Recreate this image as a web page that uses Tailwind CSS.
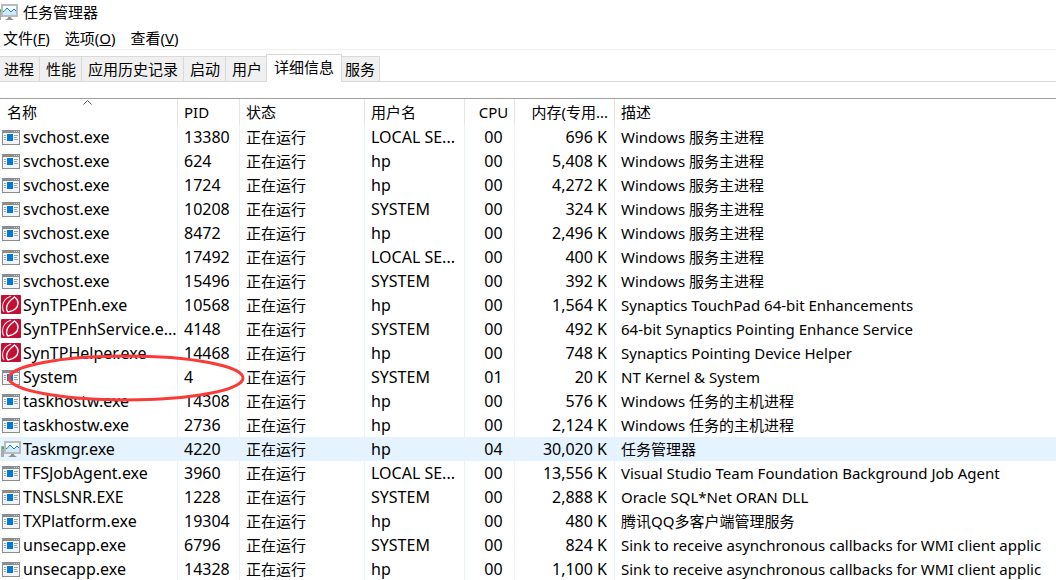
<!DOCTYPE html>
<html lang="zh-CN">
<head>
  <meta charset="UTF-8" />
  <meta name="viewport" content="width=device-width, initial-scale=1" />
  <title>任务管理器</title>
  <script src="https://cdn.jsdelivr.net/npm/@tailwindcss/browser@4"></script>
</head>
<body class="bg-white text-black h-screen overflow-hidden flex flex-col font-['Noto_Sans','Noto_Sans_CJK_SC',sans-serif] text-[15px] leading-6">

  <!-- Icon set -->
  <svg class="hidden">
    <symbol id="icon-app" viewBox="0 0 18 15">
      <rect width="18" height="15" fill="#8a8d90" />
      <rect x="1" y="3" width="16" height="11" fill="#f3f3f3" />
      <path d="M12 1h1v1h-1zM14 1h1v1h-1zM16 1h1v1h-1z" fill="#d0d2d3" />
      <rect x="5" y="4" width="6" height="7" fill="#0078d7" />
      <path d="M2 5.5h2M2 7.5h2M2 9.5h2M12 5.5h4M12 7.5h3M12 9.5h4" stroke="#a0a3a6" />
    </symbol>
    <symbol id="icon-syn" viewBox="0 0 20 20">
      <rect width="20" height="19" rx="1" fill="#c40f35" />
      <path d="M10 1C5 3 1.5 7 1.5 12c0 2 .5 3.500 1.500 5" fill="none" stroke="#f6d5dc" stroke-width="1.2" />
      <path d="M13.5 2C8 6 5.5 9 5.5 13c0 1.500.5 3 1.500 4c6-1 10-4 10-9c0-2.500-1.500-4.500-3.500-6z" fill="none" stroke="#fff" stroke-width="1.4" />
    </symbol>
    <symbol id="icon-mgr" viewBox="0 0 20 18">
      <path d="M0 6h3v11H0z" fill="#a9acae" />
      <path d="M1 7h2v2H1z" fill="#22c522" />
      <rect x="3" y="1" width="17" height="13" fill="#b9bbbd" />
      <rect x="5" y="3" width="13" height="9" fill="#fafdff" />
      <path d="M5 8l2 0 3-3 3 4 3-3 2 1v5H5z" fill="#cfeafb" />
      <path d="M5 8.5h1l3-3.5 4 4 3-3 2 2" fill="none" stroke="#1682c4" />
      <path d="M10 14h3v1l3 2H7l3-2z" fill="#8f9295" />
    </symbol>
  </svg>

  <!-- Title bar -->
  <header class="flex items-center h-[23px] overflow-hidden">
    <svg class="w-5 h-[18px] -ml-0.5 mr-[5px] shrink-0"><use href="#icon-mgr" /></svg>
    <h1>任务管理器</h1>
  </header>

  <!-- Menu bar -->
  <nav class="flex items-center gap-[15px] h-[27px] pl-[3px] pt-1 border-b border-[#f0f0f0]">
    <button type="button">文件(<u>F</u>)</button>
    <button type="button">选项(<u>O</u>)</button>
    <button type="button">查看(<u>V</u>)</button>
  </nav>

  <!-- Tabs -->
  <div role="tablist" class="flex items-end h-8 border-b border-[#d9d9d9] shrink-0">
    <button type="button" role="tab" class="h-[25px] pl-1 pr-[5px] bg-[#f0f0f0] border-t border-r border-[#d9d9d9]">进程</button>
    <button type="button" role="tab" class="h-[25px] pl-1.5 pr-[5px] bg-[#f0f0f0] border-t border-r border-[#d9d9d9]">性能</button>
    <button type="button" role="tab" class="h-[25px] pl-1.5 pr-[5px] bg-[#f0f0f0] border-t border-r border-[#d9d9d9]">应用历史记录</button>
    <button type="button" role="tab" class="h-[25px] pl-1.5 pr-[5px] bg-[#f0f0f0] border-t border-r border-[#d9d9d9]">启动</button>
    <button type="button" role="tab" class="h-[25px] pl-1.5 pr-1 bg-[#f0f0f0] border-t border-[#d9d9d9]">用户</button>
    <button type="button" role="tab" aria-selected="true" class="h-7 -mb-px px-[7px] pb-1 bg-white border-t border-x border-[#d9d9d9]">详细信息</button>
    <button type="button" role="tab" class="h-[25px] pl-[3px] pr-1 bg-[#f0f0f0] border-t border-r border-[#d9d9d9]">服务</button>
  </div>

  <!-- Process list -->
  <main class="relative mt-4 border-t border-[#a0a0a0] flex-1 overflow-hidden">
    <table class="w-full table-fixed border-separate border-spacing-0 whitespace-nowrap">
      <colgroup>
        <col class="w-[178px]" />
        <col class="w-[62px]" />
        <col class="w-[125px]" />
        <col class="w-[100px]" />
        <col class="w-[50px]" />
        <col class="w-[100px]" />
        <col />
      </colgroup>
      <thead>
        <tr class="h-[26px] text-left">
          <th class="relative p-0 pl-[7px] border-r border-[#e5e5e5] font-normal">
            <button type="button">名称</button>
            <svg class="absolute left-[83px] top-px w-[9px] h-[5px]" viewBox="0 0 9 5"><path d="M.5 4.5l4-4 4 4" fill="none" stroke="#606060" /></svg>
          </th>
          <th class="p-0 pl-1.5 border-r border-[#e5e5e5] font-normal"><button type="button">PID</button></th>
          <th class="p-0 pl-1.5 border-r border-[#e5e5e5] font-normal"><button type="button">状态</button></th>
          <th class="p-0 pl-1.5 border-r border-[#e5e5e5] font-normal"><button type="button">用户名</button></th>
          <th class="p-0 pl-2 border-r border-[#e5e5e5] font-normal text-center"><button type="button">CPU</button></th>
          <th class="p-0 pr-1.5 border-r border-[#e5e5e5] font-normal text-right"><button type="button">内存(专用...</button></th>
          <th class="p-0 pl-1.5 font-normal"><button type="button">描述</button></th>
        </tr>
      </thead>
      <tbody id="processRows" class="text-base leading-6"></tbody>
    </table>

    <!-- Red marker around the System row -->
    <svg class="absolute left-[6px] top-[255px] w-[240px] h-[50px]" viewBox="0 0 240 50">
      <ellipse cx="120" cy="24" rx="117" ry="22" fill="none" stroke="#f93c39" stroke-width="3" />
    </svg>
  </main>

  <script>
    const processes = [
      ['app', 'svchost.exe', '13380', 'LOCAL SE...', '00', '696 K', 'Windows 服务主进程'],
      ['app', 'svchost.exe', '624', 'hp', '00', '5,408 K', 'Windows 服务主进程'],
      ['app', 'svchost.exe', '1724', 'hp', '00', '4,272 K', 'Windows 服务主进程'],
      ['app', 'svchost.exe', '10208', 'SYSTEM', '00', '324 K', 'Windows 服务主进程'],
      ['app', 'svchost.exe', '8472', 'hp', '00', '2,496 K', 'Windows 服务主进程'],
      ['app', 'svchost.exe', '17492', 'LOCAL SE...', '00', '400 K', 'Windows 服务主进程'],
      ['app', 'svchost.exe', '15496', 'SYSTEM', '00', '392 K', 'Windows 服务主进程'],
      ['syn', 'SynTPEnh.exe', '10568', 'hp', '00', '1,564 K', 'Synaptics TouchPad 64-bit Enhancements'],
      ['syn', 'SynTPEnhService.e...', '4148', 'SYSTEM', '00', '492 K', '64-bit Synaptics Pointing Enhance Service'],
      ['syn', 'SynTPHelper.exe', '14468', 'hp', '00', '748 K', 'Synaptics Pointing Device Helper'],
      ['app', 'System', '4', 'SYSTEM', '01', '20 K', 'NT Kernel & System'],
      ['app', 'taskhostw.exe', '14308', 'hp', '00', '576 K', 'Windows 任务的主机进程'],
      ['app', 'taskhostw.exe', '2736', 'hp', '00', '2,124 K', 'Windows 任务的主机进程'],
      ['mgr', 'Taskmgr.exe', '4220', 'hp', '04', '30,020 K', '任务管理器'],
      ['app', 'TFSJobAgent.exe', '3960', 'LOCAL SE...', '00', '13,556 K', 'Visual Studio Team Foundation Background Job Agent'],
      ['app', 'TNSLSNR.EXE', '1228', 'SYSTEM', '00', '2,888 K', 'Oracle SQL*Net ORAN DLL'],
      ['app', 'TXPlatform.exe', '19304', 'hp', '00', '480 K', '腾讯QQ多客户端管理服务'],
      ['app', 'unsecapp.exe', '6796', 'SYSTEM', '00', '824 K', 'Sink to receive asynchronous callbacks for WMI client applic'],
      ['app', 'unsecapp.exe', '14328', 'hp', '00', '1,100 K', 'Sink to receive asynchronous callbacks for WMI client applic']
    ];

    const icons = {
      app: '<svg class="w-[18px] h-[15px] ml-0.5 mr-[3px] shrink-0"><use href="#icon-app" /></svg>',
      syn: '<svg class="w-5 h-5 ml-px mr-0.5 shrink-0"><use href="#icon-syn" /></svg>',
      mgr: '<svg class="w-5 h-[18px] ml-px mr-0.5 shrink-0"><use href="#icon-mgr" /></svg>'
    };

    document.getElementById('processRows').innerHTML = processes.map(([icon, name, pid, user, cpu, mem, desc]) => `
      <tr class="h-6 ${icon === 'mgr' ? 'bg-[#e5f3ff]' : ''}">
        <td class="p-0 border-r border-[#e9f1fb]"><div class="flex items-center h-6">${icons[icon]}${name}</div></td>
        <td class="p-0 pl-1.5 border-r border-[#e9f1fb]">${pid}</td>
        <td class="p-0 pl-1.5 border-r border-[#e9f1fb] text-[15px]">正在运行</td>
        <td class="p-0 pl-1.5 border-r border-[#e9f1fb]">${user}</td>
        <td class="p-0 pl-2 border-r border-[#e9f1fb] text-center">${cpu}</td>
        <td class="p-0 pr-[7px] border-r border-[#e9f1fb] text-right">${mem}</td>
        <td class="p-0 pl-1.5 overflow-hidden text-[15px]">${desc.replace('&', '&amp;')}</td>
      </tr>`).join('');
  </script>
</body>
</html>
